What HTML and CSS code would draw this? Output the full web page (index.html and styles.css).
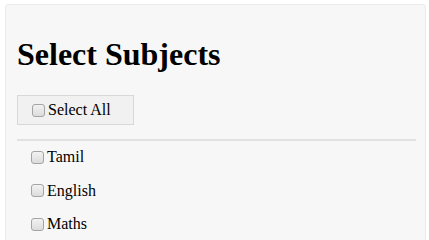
FILE: index.html
```html
<!DOCTYPE html>
<html>
<head>
<meta charset="utf-8">
<link rel="stylesheet" href="styles.css">
</head>
<body>
<div class="panel">
  <h1 class="title">Select Subjects</h1>
  <label class="select-all"><input type="checkbox" class="box"> Select All</label>
  <hr class="divider">
  <ul class="subjects">
    <li class="subject"><label><input type="checkbox" class="box"> Tamil</label></li>
    <li class="subject"><label><input type="checkbox" class="box"> English</label></li>
    <li class="subject"><label><input type="checkbox" class="box"> Maths</label></li>
  </ul>
</div>
</body>
</html>
```

FILE: styles.css
```css
html, body {
  margin: 0;
  padding: 0;
  height: 100%;
  background: #ffffff;
  font-family: "Liberation Serif", "Times New Roman", serif;
  color: #000;
  overflow: hidden;
}
.panel {
  margin: 4px 3px 0 5px;
  padding: 12px 9px 0 11px;
  background: #f8f7f7;
  border: 1px solid #ebebeb;
  border-bottom: none;
  border-radius: 4px 4px 0 0;
  height: calc(100% - 4px);
  box-sizing: border-box;
  overflow: hidden;
}
.title {
  font-size: 32px;
  font-weight: bold;
  margin: 19px 0 22px;
  line-height: 37px;
}
.select-all {
  display: inline-flex;
  align-items: center;
  width: 117px;
  height: 30px;
  box-sizing: border-box;
  padding: 0 0 0 14px;
  background: #f1f1f1;
  border: 1px solid #d8d8d8;
  font-size: 16px;
  line-height: 18px;
}
.box {
  appearance: none;
  -webkit-appearance: none;
  width: 13px;
  height: 13px;
  margin: 0 3px 0 0;
  border: 1px solid #a4a4a4;
  border-radius: 3px;
  background: linear-gradient(#f2f2f2, #dcdcdc);
  box-sizing: border-box;
}
.divider {
  border: none;
  border-top: 2px solid #e2e0e1;
  margin: 14px 0 0;
  height: 0;
}
.subjects {
  list-style: none;
  margin: 0;
  padding: 0 0 0 14px;
}
.subject {
  font-size: 16px;
  line-height: 18px;
  padding: 7px 0;
}
.subject label {
  display: inline-flex;
  align-items: center;
}
```
